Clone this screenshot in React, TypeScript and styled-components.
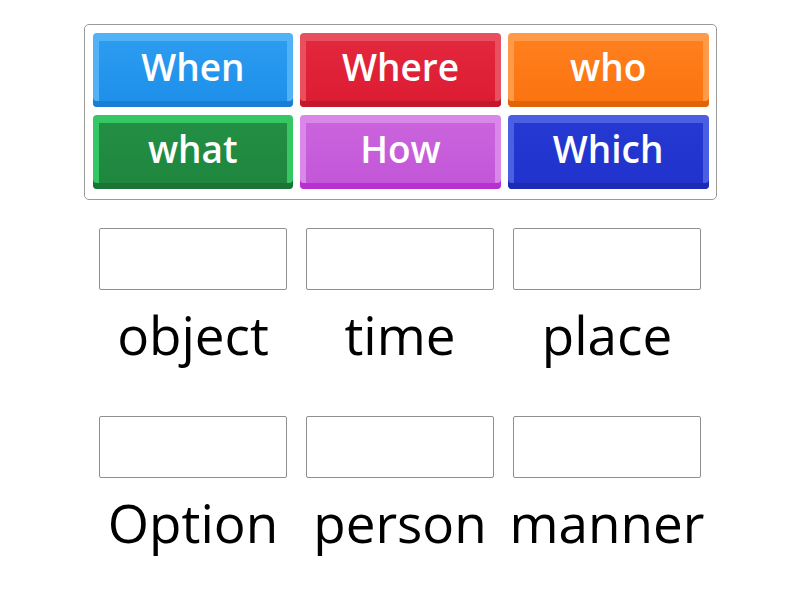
import React from "react";
import styled, { createGlobalStyle } from "styled-components";

const Global = createGlobalStyle`
  html, body { margin: 0; padding: 0; background: #ffffff; }
  body { font-family: "Open Sans", "Noto Sans", sans-serif; }
`;

const Page = styled.div`
  width: 800px;
  height: 600px;
  padding-top: 24px;
  box-sizing: border-box;
  display: flex;
  flex-direction: column;
  align-items: center;
`;

const Bank = styled.div`
  width: 633px;
  box-sizing: border-box;
  border: 1px solid #9a9a9a;
  border-radius: 5px;
  padding: 8px 7px 10px 8px;
  display: grid;
  grid-template-columns: repeat(3, 1fr);
  column-gap: 7px;
  row-gap: 8px;
`;

type TileColors = { light: string; base: string; top: string; dark: string };

const Tile = styled.div<{ $c: TileColors }>`
  height: 74px;
  box-sizing: border-box;
  border-radius: 4px;
  background: ${(p) => p.$c.light};
  padding: 8px 6px 0 6px;
  display: flex;
  flex-direction: column;
  box-shadow: inset 0 -6px 0 ${(p) => p.$c.dark};
  overflow: hidden;
`;

const TileFace = styled.div<{ $c: TileColors }>`
  flex: 1;
  margin-bottom: 6px;
  background: linear-gradient(${(p) => p.$c.top}, ${(p) => p.$c.base});
  display: flex;
  align-items: center;
  justify-content: center;
  color: #ffffff;
  font-family: "Open Sans", sans-serif;
  font-weight: 600;
  font-size: 37px;
  line-height: 1;
  padding-bottom: 9px;
`;

const Targets = styled.div`
  margin-top: 28px;
  display: grid;
  grid-template-columns: repeat(3, 207px);
  row-gap: 46px;
`;

const Cell = styled.div`
  display: flex;
  flex-direction: column;
  align-items: center;
`;

const DropBox = styled.div`
  width: 188px;
  height: 62px;
  box-sizing: border-box;
  border: 1px solid #8f8f8f;
  border-radius: 2px;
  background: #ffffff;
`;

const Label = styled.div`
  margin-top: 10px;
  font-family: "Open Sans", sans-serif;
  font-size: 53px;
  line-height: 70px;
  color: #000000;
  white-space: nowrap;
`;

const tiles: { text: string; c: TileColors }[] = [
  { text: "When", c: { light: "#52b2f6", top: "#2b9cf0", base: "#1f90ea", dark: "#1a7fd4" } },
  { text: "Where", c: { light: "#e8505f", top: "#e3273c", base: "#dc1c33", dark: "#c3182c" } },
  { text: "who", c: { light: "#ff9a48", top: "#ff7f1e", base: "#fb7410", dark: "#e0640a" } },
  { text: "what", c: { light: "#34c764", top: "#228f44", base: "#1f863e", dark: "#1b7334" } },
  { text: "How", c: { light: "#d987e8", top: "#cb63dd", base: "#c257d8", dark: "#b92fd1" } },
  { text: "Which", c: { light: "#4b5fe3", top: "#2538d2", base: "#2133cc", dark: "#1c2bb4" } },
];

const labels = ["object", "time", "place", "Option", "person", "manner"];

export default function App() {
  return (
    <>
      <Global />
      <Page>
        <Bank>
          {tiles.map((t) => (
            <Tile key={t.text} $c={t.c}>
              <TileFace $c={t.c}>{t.text}</TileFace>
            </Tile>
          ))}
        </Bank>
        <Targets>
          {labels.map((l) => (
            <Cell key={l}>
              <DropBox />
              <Label>{l}</Label>
            </Cell>
          ))}
        </Targets>
      </Page>
    </>
  );
}
